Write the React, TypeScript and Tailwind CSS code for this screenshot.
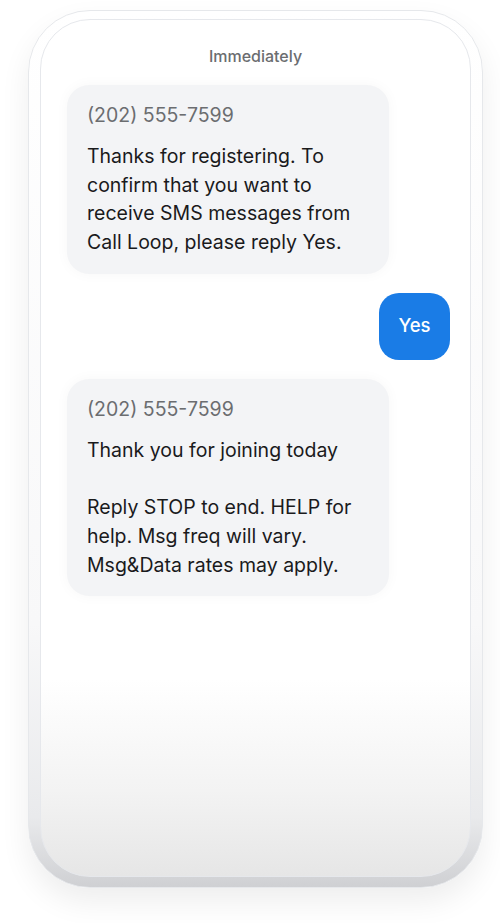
const messages = [
  {
    from: "(202) 555-7599",
    text: "Thanks for registering. To confirm that you want to receive SMS messages from Call Loop, please reply Yes.",
  },
  {
    from: "(202) 555-7599",
    text: "Thank you for joining today\n\nReply STOP to end. HELP for help. Msg freq will vary. Msg&Data rates may apply.",
  },
];

function Incoming({ from, text }: { from: string; text: string }) {
  return (
    <div className="w-[322px] self-start rounded-[22px] bg-[#f3f4f6] pl-5 pr-4 pt-[18px] pb-[17px] shadow-[0_0_14px_rgba(0,0,0,0.035)]">
      <p className="text-[19.5px] leading-6 text-[#6b6d70]">{from}</p>
      <p className="mt-[15px] whitespace-pre-line text-[19.5px] leading-[28.7px] text-[#1a1a1c]">{text}</p>
    </div>
  );
}

export default function App() {
  return (
    <div
      className="h-[923px] w-[500px] bg-white pt-[10px] pl-[28px]"
      style={{ fontFamily: "Inter, 'Noto Sans', sans-serif" }}
    >
      <div className="h-[878px] w-[455px] rounded-[62px] border border-[#e6e8eb] bg-[linear-gradient(to_bottom,#ffffff_0%,#f8f8f9_70%,#e9eaec_92%,#cfd0d3_100%)] px-[11px] pt-2 pb-[10px] shadow-[0_14px_30px_rgba(0,0,0,0.07)]">
        <div className="flex h-full flex-col rounded-[50px] border border-[#e6e8ec] bg-[linear-gradient(to_bottom,#ffffff_0%,#ffffff_77%,#f3f3f3_90%,#e6e6e6_100%)] px-[26px] pt-[25px] pb-6">
          <p className="text-center text-[16px] font-medium leading-[22px] text-[#6b6d70]">Immediately</p>

          <div className="mt-[18px] flex flex-col gap-[19px]">
            <Incoming from={messages[0].from} text={messages[0].text} />

            <div className="-mr-[6px] flex h-[67px] w-[71px] items-center justify-center self-end rounded-[20px] bg-[#1a7ce6] text-[18.5px] font-medium text-white">
              Yes
            </div>

            <Incoming from={messages[1].from} text={messages[1].text} />
          </div>
        </div>
      </div>
    </div>
  );
}
